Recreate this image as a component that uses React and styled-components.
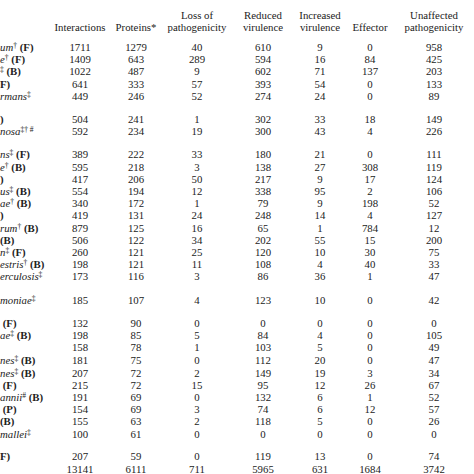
import React from "react";
import styled, { createGlobalStyle } from "styled-components";

const Global = createGlobalStyle`
  html, body { margin: 0; padding: 0; background: #ffffff; }
  body { font-family: "Liberation Serif", "Times New Roman", serif; color: #222; }
`;

const Page = styled.div`
  width: 474px;
  height: 474px;
  overflow: hidden;
  background: #fff;
`;

const DataTable = styled.table`
  width: 474px;
  table-layout: fixed;
  border-collapse: collapse;
  border-spacing: 0;
  font-size: 10.8px;
  line-height: 12.2px;
  color: #222;
`;

const HeadCell = styled.th`
  font-weight: normal;
  text-align: center;
  vertical-align: bottom;
  padding: 9px 0 7.5px;
  white-space: nowrap;
`;

const Row = styled.tr`
  & > td {
    padding-top: ${(p) => p.$gap}px;
  }
`;

const LabelCell = styled.td`
  text-align: left;
  vertical-align: bottom;
  white-space: nowrap;
  overflow: hidden;
  padding: 0;
`;

const NumCell = styled.td`
  text-align: center;
  vertical-align: bottom;
  white-space: nowrap;
  padding: 0;
`;

const Species = styled.i`
  font-style: italic;
`;

const Mark = styled.sup`
  font-size: 70%;
  line-height: 0;
  vertical-align: 0.45em;
`;

const Kingdom = styled.b`
  font-weight: bold;
`;

const cols = [50, 60, 52, 70, 62, 52, 48, 80];

const L = (sp, mark, k) => (
  <>
    {sp && <Species>{sp}</Species>}
    {mark && <Mark>{mark}</Mark>}
    {k && (
      <>
        {sp || mark ? " " : ""}
        <Kingdom>{k}</Kingdom>
      </>
    )}
  </>
);

const rows = [
  [L("um", "†", "(F)"), 1711, 1279, 40, 610, 9, 0, 958],
  [L("e", "†", "(F)"), 1409, 643, 289, 594, 16, 84, 425],
  [L(null, "‡", "(B)"), 1022, 487, 9, 602, 71, 137, 203],
  [L(null, null, "F)"), 641, 333, 57, 393, 54, 0, 133],
  [L("rmans", "‡"), 449, 246, 52, 274, 24, 0, 89],
  [L(null, null, ")"), 504, 241, 1, 302, 33, 18, 149, 11],
  [L("nosa", "‡† #"), 592, 234, 19, 300, 43, 4, 226],
  [L("ns", "‡", "(F)"), 389, 222, 33, 180, 21, 0, 111, 11],
  [L("e", "†", "(B)"), 595, 218, 3, 138, 27, 308, 119],
  [L(null, null, ")"), 417, 206, 50, 217, 9, 17, 124],
  [L("us", "‡", "(B)"), 554, 194, 12, 338, 95, 2, 106],
  [L("ae", "†", "(B)"), 340, 172, 1, 79, 9, 198, 52],
  [L(null, null, ")"), 419, 131, 24, 248, 14, 4, 127],
  [L("rum", "†", "(B)"), 879, 125, 16, 65, 1, 784, 12],
  [L(null, null, "(B)"), 506, 122, 34, 202, 55, 15, 200],
  [L("n", "‡", "(F)"), 260, 121, 25, 120, 10, 30, 75],
  [L("estris", "†", "(B)"), 198, 121, 11, 108, 4, 40, 33],
  [L("erculosis", "‡"), 173, 116, 3, 86, 36, 1, 47],
  [L("moniae", "‡"), 185, 107, 4, 123, 10, 0, 42, 11],
  [L(null, null, "\u00a0(F)"), 132, 90, 0, 0, 0, 0, 0, 11],
  [L("ae", "‡", "(B)"), 198, 85, 5, 84, 4, 0, 105],
  ["", 158, 78, 1, 103, 5, 0, 49],
  [L("nes", "‡", "(B)"), 181, 75, 0, 112, 20, 0, 47, 1],
  [L("nes", "‡", "(B)"), 207, 72, 2, 149, 19, 3, 34],
  [L(null, null, "\u00a0(F)"), 215, 72, 15, 95, 12, 26, 67],
  [L("annii", "#", "(B)"), 191, 69, 0, 132, 6, 1, 52],
  [L(null, null, "\u00a0(P)"), 154, 69, 3, 74, 6, 12, 57],
  [L(null, null, "(B)"), 155, 63, 2, 118, 5, 0, 26],
  [L("mallei", "‡"), 100, 61, 0, 0, 0, 0, 0],
  [L(null, null, "F)"), 207, 59, 0, 119, 13, 0, 74, 10.5],
  ["", 13141, 6111, 711, 5965, 631, 1684, 3742],
];

export default function App() {
  return (
    <Page>
      <Global />
      <DataTable>
        <colgroup>
          {cols.map((w, i) => (
            <col key={i} style={{ width: w }} />
          ))}
        </colgroup>
        <thead>
          <tr>
            <HeadCell />
            <HeadCell>Interactions</HeadCell>
            <HeadCell>Proteins*</HeadCell>
            <HeadCell>
              Loss of
              <br />
              pathogenicity
            </HeadCell>
            <HeadCell>
              Reduced
              <br />
              virulence
            </HeadCell>
            <HeadCell>
              Increased
              <br />
              virulence
            </HeadCell>
            <HeadCell>Effector</HeadCell>
            <HeadCell>
              Unaffected
              <br />
              pathogenicity
            </HeadCell>
          </tr>
        </thead>
        <tbody>
          {rows.map((r, i) => (
            <Row key={i} $gap={r[8] || 0}>
              <LabelCell>{r[0]}</LabelCell>
              {r.slice(1, 8).map((v, j) => (
                <NumCell key={j}>{v}</NumCell>
              ))}
            </Row>
          ))}
        </tbody>
      </DataTable>
    </Page>
  );
}
